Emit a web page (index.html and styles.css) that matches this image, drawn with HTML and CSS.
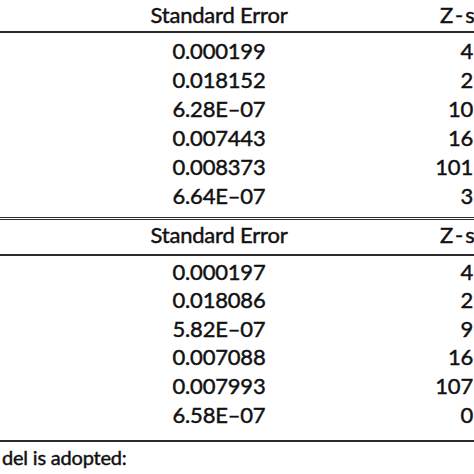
FILE: index.html
```html
<!DOCTYPE html>
<html>
<head>
<meta charset="utf-8">
<link rel="stylesheet" href="styles.css">
</head>
<body>
<div class="page">
  <div class="block first">
    <div class="row head"><div class="c1"></div><div class="c2">Standard Error</div><div class="c3 zh">Z-score</div></div>
    <div class="rows">
      <div class="row"><div class="c1"></div><div class="c2">0.000199</div><div class="c3">4</div></div>
      <div class="row"><div class="c1"></div><div class="c2">0.018152</div><div class="c3">2</div></div>
      <div class="row"><div class="c1"></div><div class="c2">6.28E–07</div><div class="c3">10</div></div>
      <div class="row"><div class="c1"></div><div class="c2">0.007443</div><div class="c3">16</div></div>
      <div class="row"><div class="c1"></div><div class="c2">0.008373</div><div class="c3">101</div></div>
      <div class="row"><div class="c1"></div><div class="c2">6.64E–07</div><div class="c3">3</div></div>
    </div>
  </div>
  <div class="double"></div>
  <div class="block second">
    <div class="row head"><div class="c1"></div><div class="c2">Standard Error</div><div class="c3 zh">Z-score</div></div>
    <div class="rows">
      <div class="row"><div class="c1"></div><div class="c2">0.000197</div><div class="c3">4</div></div>
      <div class="row"><div class="c1"></div><div class="c2">0.018086</div><div class="c3">2</div></div>
      <div class="row"><div class="c1"></div><div class="c2">5.82E–07</div><div class="c3">9</div></div>
      <div class="row"><div class="c1"></div><div class="c2">0.007088</div><div class="c3">16</div></div>
      <div class="row"><div class="c1"></div><div class="c2">0.007993</div><div class="c3">107</div></div>
      <div class="row"><div class="c1"></div><div class="c2">6.58E–07</div><div class="c3">0</div></div>
    </div>
  </div>
  <div class="note">del is adopted:</div>
</div>
</body>
</html>
```
FILE: styles.css
```css
html, body {
  margin: 0;
  padding: 0;
  background: #ffffff;
}
body {
  width: 474px;
  height: 474px;
  overflow: hidden;
  font-family: Lato, "Liberation Sans", sans-serif;
  font-size: 22px;
  letter-spacing: -0.2px;
  color: #111111;
  -webkit-text-stroke: 0.45px #111111;
}
.page {
  width: 474px;
  display: flex;
  flex-direction: column;
}
.row {
  display: grid;
  grid-template-columns: 145px 148px 181px;
  height: 29px;
  line-height: 29px;
  white-space: nowrap;
}
.c2 {
  text-align: center;
}
.c3 {
  text-align: right;
  padding-right: 1px;
  overflow: hidden;
}
.c3.zh {
  text-align: left;
  padding-left: 147px;
  padding-right: 0;
  letter-spacing: 2px;
}
.head {
  border-bottom: 2px solid #2a2a2a;
}
.first .head {
  height: 31px;
}
.first .rows {
  padding-top: 2.5px;
}
.first .rows .row {
  height: 29.2px;
}
.double {
  margin-top: 6px;
  height: 1.5px;
  border-top: 1.5px solid #2a2a2a;
  border-bottom: 1.5px solid #2a2a2a;
}
.second .head {
  height: 34px;
}
.second .rows {
  padding-top: 0.5px;
  padding-bottom: 12px;
  border-bottom: 2px solid #2a2a2a;
}
.second .rows .row {
  height: 28.6px;
}
.note {
  padding-left: 2px;
  padding-top: 4px;
  font-size: 20px;
  line-height: 23px;
  white-space: nowrap;
}
```
